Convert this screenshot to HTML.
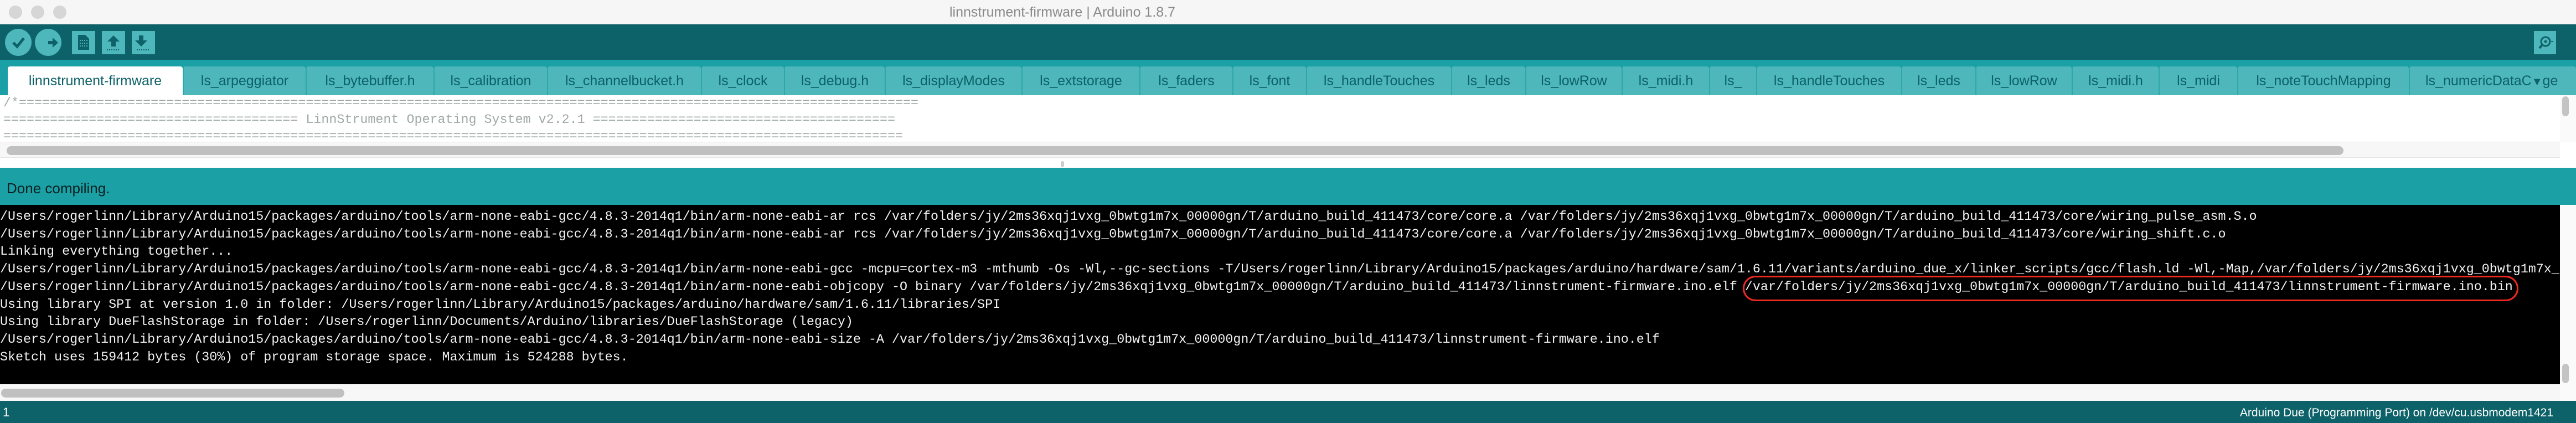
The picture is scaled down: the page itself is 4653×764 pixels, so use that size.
<!DOCTYPE html>
<html><head><meta charset="utf-8">
<style>
*{margin:0;padding:0;box-sizing:border-box}
html,body{width:4653px;height:764px;overflow:hidden;background:#fff;font-family:"Liberation Sans",sans-serif}
.a{position:absolute}
.mono{font-family:"Liberation Mono",monospace;white-space:pre}
.tab{position:absolute;top:120px;height:52px;background:#4db7bb;border-left:2px solid #2ea7ab;color:#0d6168;font-size:25px;line-height:52px;text-align:center;white-space:nowrap;overflow:hidden;border-radius:4px 4px 0 0}
.cl{position:absolute;left:0;font-size:23.35px;line-height:31px;color:#f2f2f2;white-space:pre;font-family:"Liberation Mono",monospace}
.btn{position:absolute;background:#4db7bb}
</style></head><body>
<div class="a" style="left:0;top:0;width:4653px;height:44px;background:#f6f6f6;border-bottom:1px solid #d8d8d8"></div>
<div class="a" style="left:16px;top:10px;width:24px;height:24px;border-radius:50%;background:#d6d6d6"></div>
<div class="a" style="left:56px;top:10px;width:24px;height:24px;border-radius:50%;background:#d6d6d6"></div>
<div class="a" style="left:96px;top:10px;width:24px;height:24px;border-radius:50%;background:#d6d6d6"></div>
<div class="a" style="left:1689px;top:6px;width:460px;text-align:center;font-size:25px;line-height:32px;color:#8a8a8a;white-space:nowrap">linnstrument-firmware | Arduino 1.8.7</div>
<div class="a" style="left:0;top:44px;width:4653px;height:64px;background:#0d6168"></div>
<div class="btn" style="left:9px;top:52px;width:48px;height:49px;border-radius:50%"></div>
<div class="btn" style="left:63px;top:52px;width:48px;height:49px;border-radius:50%"></div>
<svg class="a" style="left:9px;top:52px" width="102" height="49" viewBox="0 0 102 49">
<path d="M15 25 L22 32 L34 17" stroke="#0d6168" stroke-width="5" fill="none"/>
<path d="M78 22 H86 V16 L96 25 L86 34 V28 H78 Z" fill="#0d6168"/>
</svg>
<div class="btn" style="left:130px;top:56px;width:42px;height:42px"></div>
<div class="btn" style="left:184px;top:56px;width:42px;height:42px"></div>
<div class="btn" style="left:238px;top:56px;width:42px;height:42px"></div>
<svg class="a" style="left:130px;top:56px" width="150" height="42" viewBox="0 0 150 42">
<path d="M11 7 H24 L31 14 V34 H11 Z" fill="#0d6168"/>
<g fill="#4db7bb"><rect x="14" y="16" width="2" height="2"/><rect x="18" y="16" width="2" height="2"/><rect x="22" y="16" width="2" height="2"/><rect x="26" y="16" width="2" height="2"/>
<rect x="14" y="21" width="2" height="2"/><rect x="18" y="21" width="2" height="2"/><rect x="22" y="21" width="2" height="2"/><rect x="26" y="21" width="2" height="2"/>
<rect x="14" y="26" width="2" height="2"/><rect x="18" y="26" width="2" height="2"/><rect x="22" y="26" width="2" height="2"/><rect x="26" y="26" width="2" height="2"/></g>
<path d="M75 8 L86 19 H79 V28 H71 V19 H64 Z" fill="#0d6168"/>
<path d="M63 34 H87" stroke="#0d6168" stroke-width="2" stroke-dasharray="2 2"/>
<path d="M125 28 L136 17 H129 V8 H121 V17 H114 Z" fill="#0d6168"/>
<path d="M117 34 H141" stroke="#0d6168" stroke-width="2" stroke-dasharray="2 2"/>
</svg>
<div class="btn" style="left:4577px;top:56px;width:40px;height:42px"></div>
<svg class="a" style="left:4577px;top:56px" width="40" height="42" viewBox="0 0 40 42">
<circle cx="21" cy="19" r="8" stroke="#0d6168" stroke-width="3" fill="none"/><circle cx="21" cy="19" r="2.5" fill="#0d6168"/>
<path d="M15 25 L10 31" stroke="#0d6168" stroke-width="4"/><path d="M31 19 H35" stroke="#0d6168" stroke-width="2" stroke-dasharray="1 1"/>
</svg>
<div class="a" style="left:0;top:108px;width:4653px;height:64px;background:#1ba0a5"></div>
<div class="tab" style="left:14px;width:316px;background:#fff;border:none;color:#0d6168">linnstrument-firmware</div>
<div class="tab" style="left:330px;width:222px">ls_arpeggiator</div>
<div class="tab" style="left:552px;width:231px">ls_bytebuffer.h</div>
<div class="tab" style="left:783px;width:205px">ls_calibration</div>
<div class="tab" style="left:988px;width:278px">ls_channelbucket.h</div>
<div class="tab" style="left:1266px;width:150px">ls_clock</div>
<div class="tab" style="left:1416px;width:182px">ls_debug.h</div>
<div class="tab" style="left:1598px;width:247px">ls_displayModes</div>
<div class="tab" style="left:1845px;width:213px">ls_extstorage</div>
<div class="tab" style="left:2058px;width:168px">ls_faders</div>
<div class="tab" style="left:2226px;width:133px">ls_font</div>
<div class="tab" style="left:2359px;width:262px">ls_handleTouches</div>
<div class="tab" style="left:2621px;width:134px">ls_leds</div>
<div class="tab" style="left:2755px;width:174px">ls_lowRow</div>
<div class="tab" style="left:2929px;width:158px">ls_midi.h</div>
<div class="tab" style="left:3087px;width:85px">ls_</div>
<div class="tab" style="left:3172px;width:262px">ls_handleTouches</div>
<div class="tab" style="left:3434px;width:134px">ls_leds</div>
<div class="tab" style="left:3568px;width:174px">ls_lowRow</div>
<div class="tab" style="left:3742px;width:157px">ls_midi.h</div>
<div class="tab" style="left:3899px;width:142px">ls_midi</div>
<div class="tab" style="left:4041px;width:310px">ls_noteTouchMapping</div>
<div class="tab" style="left:4351px;width:302px;text-align:left;padding-left:28px">ls_numericDataC<span style="font-size:20px">▼</span>ge</div>
<div class="a mono" style="left:6px;top:172px;font-size:23.35px;line-height:30px;color:#a0a8a8">/*====================================================================================================================
====================================== LinnStrument Operating System v2.2.1 =======================================
====================================================================================================================</div>
<div class="a" style="left:4624px;top:172px;width:29px;height:84px;background:#fafafa"></div>
<div class="a" style="left:4628px;top:174px;width:12px;height:36px;border-radius:6px;background:#c4c4c4"></div>
<div class="a" style="left:0;top:256px;width:4624px;height:29px;background:#f7f7f7;border-top:1px solid #e6e6e6;border-bottom:1px solid #e6e6e6"></div>
<div class="a" style="left:12px;top:264px;width:4221px;height:16px;border-radius:8px;background:#c0c0c0"></div>
<div class="a" style="left:1916px;top:291px;width:6px;height:11px;border-radius:3px;background:#ccc"></div>
<div class="a" style="left:0;top:303px;width:4653px;height:67px;background:#1ba0a5"></div>
<div class="a" style="left:12px;top:324px;font-size:26px;line-height:32px;color:#0a1f20">Done compiling.</div>
<div class="a" style="left:0;top:370px;width:4624px;height:324px;background:#000;overflow:hidden">
<div class="cl" style="top:7px">/Users/rogerlinn/Library/Arduino15/packages/arduino/tools/arm-none-eabi-gcc/4.8.3-2014q1/bin/arm-none-eabi-ar rcs /var/folders/jy/2ms36xqj1vxg_0bwtg1m7x_00000gn/T/arduino_build_411473/core/core.a /var/folders/jy/2ms36xqj1vxg_0bwtg1m7x_00000gn/T/arduino_build_411473/core/wiring_pulse_asm.S.o</div>
<div class="cl" style="top:38.7px">/Users/rogerlinn/Library/Arduino15/packages/arduino/tools/arm-none-eabi-gcc/4.8.3-2014q1/bin/arm-none-eabi-ar rcs /var/folders/jy/2ms36xqj1vxg_0bwtg1m7x_00000gn/T/arduino_build_411473/core/core.a /var/folders/jy/2ms36xqj1vxg_0bwtg1m7x_00000gn/T/arduino_build_411473/core/wiring_shift.c.o</div>
<div class="cl" style="top:70.4px">Linking everything together...</div>
<div class="cl" style="top:102.1px">/Users/rogerlinn/Library/Arduino15/packages/arduino/tools/arm-none-eabi-gcc/4.8.3-2014q1/bin/arm-none-eabi-gcc -mcpu=cortex-m3 -mthumb -Os -Wl,--gc-sections -T/Users/rogerlinn/Library/Arduino15/packages/arduino/hardware/sam/1.6.11/variants/arduino_due_x/linker_scripts/gcc/flash.ld -Wl,-Map,/var/folders/jy/2ms36xqj1vxg_0bwtg1m7x_00000gn/T/arduino_build_411473/linnstrument-firmware.map</div>
<div class="cl" style="top:133.8px">/Users/rogerlinn/Library/Arduino15/packages/arduino/tools/arm-none-eabi-gcc/4.8.3-2014q1/bin/arm-none-eabi-objcopy -O binary /var/folders/jy/2ms36xqj1vxg_0bwtg1m7x_00000gn/T/arduino_build_411473/linnstrument-firmware.ino.elf /var/folders/jy/2ms36xqj1vxg_0bwtg1m7x_00000gn/T/arduino_build_411473/linnstrument-firmware.ino.bin</div>
<div class="cl" style="top:165.5px">Using library SPI at version 1.0 in folder: /Users/rogerlinn/Library/Arduino15/packages/arduino/hardware/sam/1.6.11/libraries/SPI</div>
<div class="cl" style="top:197.2px">Using library DueFlashStorage in folder: /Users/rogerlinn/Documents/Arduino/libraries/DueFlashStorage (legacy)</div>
<div class="cl" style="top:228.9px">/Users/rogerlinn/Library/Arduino15/packages/arduino/tools/arm-none-eabi-gcc/4.8.3-2014q1/bin/arm-none-eabi-size -A /var/folders/jy/2ms36xqj1vxg_0bwtg1m7x_00000gn/T/arduino_build_411473/linnstrument-firmware.ino.elf</div>
<div class="cl" style="top:260.6px">Sketch uses 159412 bytes (30%) of program storage space. Maximum is 524288 bytes.</div>
</div>
<div class="a" style="left:3148px;top:498px;width:1401px;height:46px;border:3px solid #ee2a1f;border-radius:23px"></div>
<div class="a" style="left:4624px;top:370px;width:29px;height:354px;background:#fafafa"></div>
<div class="a" style="left:4628px;top:657px;width:12px;height:35px;border-radius:6px;background:#c4c4c4"></div>
<div class="a" style="left:0;top:694px;width:4624px;height:30px;background:#f7f7f7"></div>
<div class="a" style="left:2px;top:702px;width:620px;height:16px;border-radius:8px;background:#c0c0c0"></div>
<div class="a" style="left:0;top:724px;width:4653px;height:40px;background:#0d6168;overflow:hidden"></div>
<div class="a" style="left:5px;top:731px;font-size:22px;line-height:28px;color:#fff">1</div>
<div class="a" style="left:0;top:732px;width:4612px;font-size:21px;line-height:28px;color:#fff;white-space:nowrap;text-align:right">Arduino Due (Programming Port) on /dev/cu.usbmodem1421</div>
</body></html>
